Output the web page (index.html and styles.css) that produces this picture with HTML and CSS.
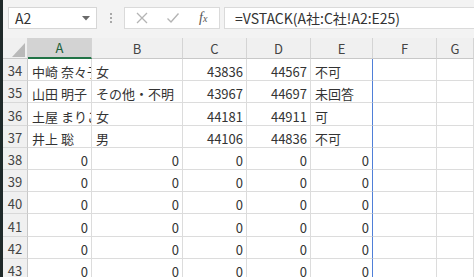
FILE: index.html
```html
<!DOCTYPE html>
<html lang="ja">
<head>
<meta charset="utf-8">
<title>Excel VSTACK</title>
<link rel="stylesheet" href="styles.css">
</head>
<body>
<div class="app">
  <div class="edge"></div>
  <div class="main">
    <div class="fbar">
      <div class="namebox">
        <span class="ref">A2</span>
        <svg class="dd" width="8" height="5" viewBox="0 0 8 5"><path d="M0 0 L8 0 L4 4.5 Z" fill="#6a6a6a"/></svg>
      </div>
      <div class="dots"><i></i><i></i><i></i></div>
      <div class="iconbox">
        <svg class="ico" width="14" height="14" viewBox="0 0 14 14"><path d="M2 2 L12 12 M12 2 L2 12" stroke="#b4b4b4" stroke-width="1.3" fill="none"/></svg>
        <svg class="ico" width="14" height="14" viewBox="0 0 14 14"><path d="M1.5 7.5 L5 11 L12.5 2.5" stroke="#b4b4b4" stroke-width="1.4" fill="none"/></svg>
        <span class="fx">f<span class="x">x</span></span>
      </div>
      <div class="formula">=VSTACK(A社:C社!A2:E25)</div>
    </div>
    <div class="grid">
      <div class="corner"><svg width="13" height="14" viewBox="0 0 13 14"><path d="M13 0 L13 14 L0 14 Z" fill="#b9b9b9"/></svg></div>
      <div class="ch sel">A</div>
      <div class="ch">B</div>
      <div class="ch">C</div>
      <div class="ch">D</div>
      <div class="ch">E</div>
      <div class="ch">F</div>
      <div class="ch">G</div>

      <div class="rh">34</div><div class="c t">中崎 奈々子</div><div class="c t">女</div><div class="c n">43836</div><div class="c n">44567</div><div class="c t e">不可</div><div class="c"></div><div class="c"></div>
      <div class="rh">35</div><div class="c t">山田 明子</div><div class="c t">その他・不明</div><div class="c n">43967</div><div class="c n">44697</div><div class="c t e">未回答</div><div class="c"></div><div class="c"></div>
      <div class="rh">36</div><div class="c t">土屋 まりこ</div><div class="c t">女</div><div class="c n">44181</div><div class="c n">44911</div><div class="c t e">可</div><div class="c"></div><div class="c"></div>
      <div class="rh">37</div><div class="c t">井上 聡</div><div class="c t">男</div><div class="c n">44106</div><div class="c n">44836</div><div class="c t e">不可</div><div class="c"></div><div class="c"></div>
      <div class="rh">38</div><div class="c n">0</div><div class="c n">0</div><div class="c n">0</div><div class="c n">0</div><div class="c n e">0</div><div class="c"></div><div class="c"></div>
      <div class="rh">39</div><div class="c n">0</div><div class="c n">0</div><div class="c n">0</div><div class="c n">0</div><div class="c n e">0</div><div class="c"></div><div class="c"></div>
      <div class="rh">40</div><div class="c n">0</div><div class="c n">0</div><div class="c n">0</div><div class="c n">0</div><div class="c n e">0</div><div class="c"></div><div class="c"></div>
      <div class="rh">41</div><div class="c n">0</div><div class="c n">0</div><div class="c n">0</div><div class="c n">0</div><div class="c n e">0</div><div class="c"></div><div class="c"></div>
      <div class="rh">42</div><div class="c n">0</div><div class="c n">0</div><div class="c n">0</div><div class="c n">0</div><div class="c n e">0</div><div class="c"></div><div class="c"></div>
      <div class="rh">43</div><div class="c n">0</div><div class="c n">0</div><div class="c n">0</div><div class="c n">0</div><div class="c n e">0</div><div class="c"></div><div class="c"></div>
    </div>
  </div>
</div>
</body>
</html>
```
FILE: styles.css
```css
html, body {
  margin: 0;
  padding: 0;
}
body {
  width: 474px;
  height: 277px;
  overflow: hidden;
  background: #f3f3f3;
  font-family: "Noto Sans CJK JP", "Noto Sans", sans-serif;
  color: #333;
}
.app {
  display: flex;
  height: 277px;
}
.edge {
  width: 3px;
  flex: none;
  background: #1f2929;
}
.main {
  flex: 1;
  display: flex;
  flex-direction: column;
  min-width: 0;
}
.fbar {
  display: flex;
  align-items: stretch;
  height: 25px;
  padding: 7px 0 0 5px;
  margin-bottom: 9px;
}
.namebox {
  width: 89px;
  box-sizing: border-box;
  background: #fff;
  border: 1px solid #d6d6d6;
  display: flex;
  align-items: center;
  justify-content: space-between;
  padding: 0 6px 0 6px;
}
.ref {
  font-size: 14px;
  color: #333;
}
.dd {
  margin-top: 1px;
}
.dots {
  width: 27px;
  display: flex;
  flex-direction: column;
  align-items: center;
  justify-content: center;
  gap: 2px;
}
.dots i {
  width: 2px;
  height: 2px;
  background: #a8a8a8;
  display: block;
}
.iconbox {
  width: 96px;
  box-sizing: border-box;
  background: #fff;
  border: 1px solid #dadada;
  display: flex;
  align-items: center;
  padding: 0 0 0 10px;
  gap: 17px;
}
.fx {
  font-family: "Liberation Serif", serif;
  font-style: italic;
  font-size: 14px;
  color: #555;
  margin-left: 2px;
}
.fx .x {
  font-size: 10px;
}
.formula {
  flex: 1;
  margin-left: 4px;
  background: #fff;
  border: 1px solid #dadada;
  border-right: none;
  display: flex;
  align-items: center;
  padding-left: 10px;
  font-size: 14px;
  color: #333;
  white-space: nowrap;
}
.grid {
  display: grid;
  grid-template-columns: 25px 64px 91px 64px 64px 62px 64px 37px;
  grid-template-rows: 21px repeat(10, 22.2px);
  background: #fff;
}
.corner {
  background: #f0f0f0;
  border-right: 1px solid #d4d4d4;
  border-bottom: 1px solid #c8c8c8;
  box-sizing: border-box;
  display: flex;
  align-items: flex-end;
  justify-content: flex-end;
  padding: 0 2px 1px 0;
}
.ch {
  background: #f0f0f0;
  border-right: 1px solid #d4d4d4;
  border-bottom: 1px solid #c8c8c8;
  box-sizing: border-box;
  display: flex;
  align-items: center;
  justify-content: center;
  font-size: 13px;
  color: #444;
}
.ch.sel {
  background: #d3d3d3;
  border-bottom: 2px solid #217346;
  color: #1d5f3a;
}
.rh {
  background: #f0f0f0;
  border-right: 1px solid #c8c8c8;
  border-bottom: 1px solid #d8d8d8;
  box-sizing: border-box;
  display: flex;
  align-items: flex-end;
  justify-content: center;
  line-height: 16px;
  padding-bottom: 1px;
  font-size: 13px;
  color: #444;
}
.c {
  border-right: 1px solid #dcdcdc;
  border-bottom: 1px solid #dcdcdc;
  box-sizing: border-box;
  display: flex;
  align-items: flex-end;
  line-height: 16px;
  padding-bottom: 0;
  overflow: hidden;
  white-space: nowrap;
  font-size: 13px;
  color: #333;
}
.c.t {
  padding-left: 4px;
}
.c.n {
  justify-content: flex-end;
  padding-right: 3px;
}
.c.e {
  border-right: 1px solid #4f7fd8;
}
```
